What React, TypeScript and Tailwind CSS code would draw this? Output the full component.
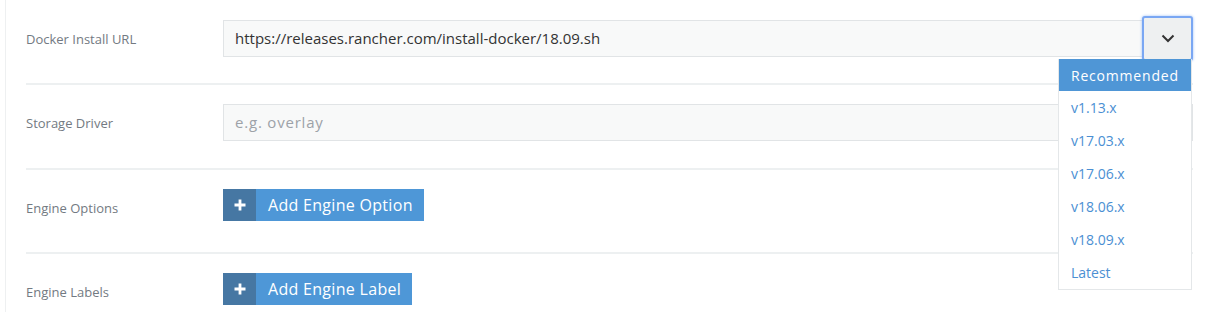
import React from "react";

const font = { fontFamily: '"Open Sans", "Liberation Sans", sans-serif' };

function Label({ children }: { children: React.ReactNode }) {
  return (
    <div className="w-[197px] shrink-0 pt-[11px] text-[13px] leading-[17px] text-[#737a82]">
      {children}
    </div>
  );
}

function Sep() {
  return <div className="h-[2px] bg-[#edf0f1]" />;
}

function AddButton({ text }: { text: string }) {
  return (
    <div className="flex h-[32px] items-stretch">
      <div className="flex w-[33px] items-center justify-center bg-[#4677a3] text-white">
        <svg width="12" height="12" viewBox="0 0 12 12">
          <path d="M6 0.5v11M0.5 6h11" stroke="white" strokeWidth="2.8" />
        </svg>
      </div>
      <div className="flex items-center bg-[#4e97d7] pl-[12px] pr-[11px] text-[16px] font-medium tracking-[0.3px] text-white">
        {text}
      </div>
    </div>
  );
}

export default function App() {
  const items = ["v1.13.x", "v17.03.x", "v17.06.x", "v18.06.x", "v18.09.x", "Latest"];
  return (
    <div className="relative h-[312px] w-[1206px] bg-white" style={font}>
      <div className="ml-[5px] h-full border-l border-[#eef0f1] pl-[20px] pr-[13px]">
        {/* Row 1 */}
        <div className="flex h-[83px] pt-[20px]">
          <Label>Docker Install URL</Label>
          <div className="flex flex-1">
            <div className="flex h-[37px] flex-1 items-center border border-r-0 border-[#e1e4e6] bg-[#f8f9f9] pl-[11px] text-[15px] text-[#333]">
              https://releases.rancher.com/install-docker/18.09.sh
            </div>
            <div className="-mt-[4px] flex h-[45px] w-[51px] items-center justify-center rounded-[3px] border-2 border-[#7aa7f3] bg-[#eef0f1] shadow-[0_0_3px_#9ec0f7]">
              <svg width="14" height="9" viewBox="0 0 14 9">
                <path d="M1.5 1.5L7 7l5.5-5.5" fill="none" stroke="#333" strokeWidth="2" />
              </svg>
            </div>
          </div>
        </div>
        <Sep />
        {/* Row 2 */}
        <div className="flex h-[83px] pt-[19px]">
          <Label>Storage Driver</Label>
          <div className="flex h-[37px] flex-1 items-center border border-[#e1e4e6] bg-[#f8f9f9] pl-[11px] text-[15px] tracking-[0.8px] text-[#9da2a8]">
            e.g. overlay
          </div>
        </div>
        <Sep />
        {/* Row 3 */}
        <div className="flex h-[82px] pt-[19px]">
          <Label>Engine Options</Label>
          <AddButton text="Add Engine Option" />
        </div>
        <Sep />
        {/* Row 4 */}
        <div className="flex pt-[19px]">
          <Label>Engine Labels</Label>
          <AddButton text="Add Engine Label" />
        </div>
      </div>

      {/* Dropdown menu */}
      <div className="absolute left-[1058px] top-[59px] w-[134px] border border-t-0 border-[#e4e7e9] bg-white">
        <div className="flex h-[32px] items-center bg-[#4f96d6] pl-[12px] text-[14px] font-medium tracking-[0.8px] text-white">
          Recommended
        </div>
        {items.map((it) => (
          <div key={it} className="flex h-[33px] items-center pl-[12px] text-[14px] text-[#4b8fd3]">
            {it}
          </div>
        ))}
      </div>
    </div>
  );
}
